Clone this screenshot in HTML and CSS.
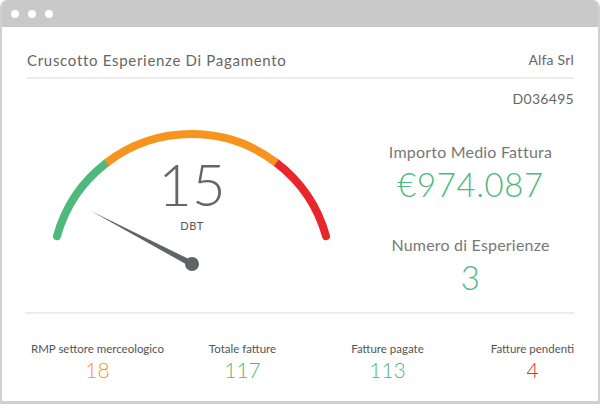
FILE: index.html
```html
<!DOCTYPE html>
<html lang="it">
<head>
<meta charset="utf-8">
<title>Cruscotto Esperienze Di Pagamento</title>
<link rel="stylesheet" href="styles.css">
</head>
<body>
<div class="window">
  <div class="titlebar">
    <span class="dot"></span><span class="dot"></span><span class="dot"></span>
  </div>
  <div class="content">
    <div class="header">
      <span class="title">Cruscotto Esperienze Di Pagamento</span>
      <span class="company">Alfa Srl</span>
    </div>
    <div class="code">D036495</div>
    <div class="main">
      <svg class="gauge" width="340" height="175" viewBox="0 0 340 175">
        <path d="M30 122.1 A139.7 139.7 0 0 1 79.7 48.8" fill="none" stroke="#4fb97d" stroke-width="8" stroke-linecap="round"/>
        <path d="M249.3 48.8 A139.7 139.7 0 0 1 299 122.1" fill="none" stroke="#e8262b" stroke-width="8" stroke-linecap="round"/>
        <path d="M79.7 48.8 A139.7 139.7 0 0 1 249.3 48.8" fill="none" stroke="#f7941e" stroke-width="8" stroke-linecap="butt"/>
        <polygon points="64,97 166.4,147.3 163.6,152.7" fill="#626366"/>
        <circle cx="165" cy="150" r="7" fill="#626366"/>
        <text class="gauge-value" x="165" y="92" text-anchor="middle">15</text>
        <text class="gauge-unit" x="165" y="116" text-anchor="middle">DBT</text>
      </svg>
      <div class="metrics">
        <div class="metric-label">Importo Medio Fattura</div>
        <div class="metric-value">€974.087</div>
        <div class="metric-label second">Numero di Esperienze</div>
        <div class="metric-value">3</div>
      </div>
    </div>
    <div class="stats">
      <div class="stat">
        <div class="stat-label">RMP settore merceologico</div>
        <div class="stat-value orange">18</div>
      </div>
      <div class="stat">
        <div class="stat-label">Totale fatture</div>
        <div class="stat-value green">117</div>
      </div>
      <div class="stat">
        <div class="stat-label">Fatture pagate</div>
        <div class="stat-value green">113</div>
      </div>
      <div class="stat">
        <div class="stat-label">Fatture pendenti</div>
        <div class="stat-value red">4</div>
      </div>
    </div>
  </div>
</div>
</body>
</html>
```

FILE: styles.css
```css
* { box-sizing: border-box; }
html, body { margin: 0; padding: 0; background: #ffffff; }
body {
  width: 600px;
  height: 404px;
  font-family: Lato, "Open Sans", sans-serif;
  color: #666666;
}
.window {
  width: 600px;
  height: 404px;
  border: 2px solid #d0d0d0;
  border-top: none;
  border-bottom-width: 3px;
  border-radius: 7px 7px 0 0;
  overflow: hidden;
  background: #ffffff;
}
.titlebar {
  height: 27px;
  background: #c9c9c9;
  display: flex;
  align-items: center;
  gap: 9px;
  padding-left: 11px;
  margin: 0 -2px;
}
.dot {
  width: 8px;
  height: 8px;
  border-radius: 50%;
  background: #ffffff;
}
.content {
  padding: 24px 24px 0 25px;
}
.header {
  display: flex;
  justify-content: space-between;
  align-items: center;
  height: 28px;
  padding-bottom: 8px;
  border-bottom: 2px solid #ececec;
  line-height: 20px;
  color: #666666;
}
.title {
  font-size: 15px;
  letter-spacing: 0.7px;
}
.company {
  font-size: 14px;
  letter-spacing: 0.2px;
}
.code {
  text-align: right;
  font-size: 14px;
  letter-spacing: 0.3px;
  line-height: 20px;
  margin-top: 10px;
  color: #666666;
}
.main {
  display: flex;
  margin-top: 5px;
  height: 175px;
}
.gauge { flex: none; display: block; }
.gauge-value {
  font-family: Lato, sans-serif;
  font-weight: 300;
  font-size: 58px;
  fill: #666666;
}
.gauge-unit {
  font-family: Lato, sans-serif;
  font-size: 11px;
  letter-spacing: 0.5px;
  fill: #555555;
}
.metrics {
  flex: 1;
  text-align: center;
  padding-top: 28px;
}
.metric-label {
  font-size: 16px;
  line-height: 20px;
  letter-spacing: 0.2px;
  color: #777777;
}
.metric-label.second { margin-top: 33px; }
.metric-value {
  font-size: 33px;
  line-height: 36px;
  font-weight: 300;
  letter-spacing: 0.6px;
  color: #4fb97d;
  margin-top: 4px;
}
.stats {
  margin-top: 23px;
  border-top: 2px solid #ececec;
  display: grid;
  grid-template-columns: repeat(4, 145px);
  padding: 27px 0 0 0;
  margin-left: -2px;
}
.stat { text-align: center; }
.stat-label {
  font-size: 11.5px;
  line-height: 16px;
  color: #555555;
}
.stat-value {
  font-size: 21px;
  line-height: 26px;
  font-weight: 300;
}
.orange { color: #f7941e; }
.green { color: #4fb97d; }
.red { color: #e8262b; }
```
